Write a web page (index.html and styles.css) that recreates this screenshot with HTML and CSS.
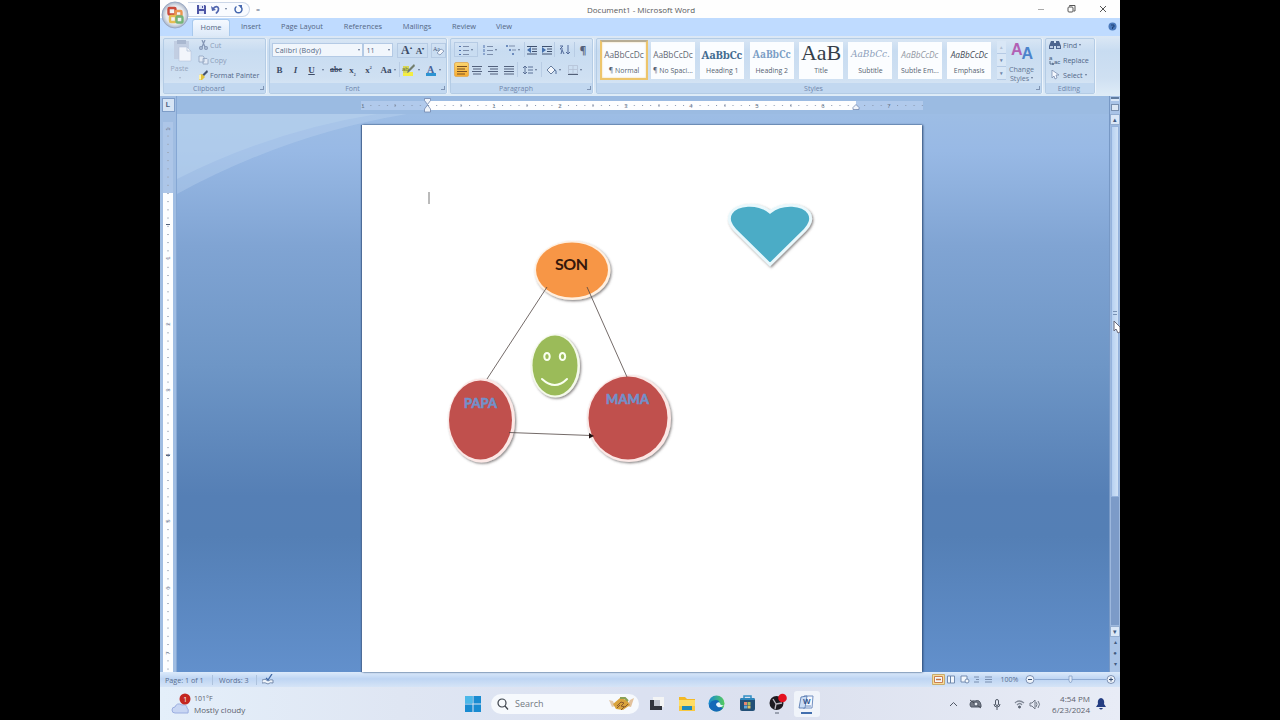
FILE: index.html
```
<!DOCTYPE html>
<html lang="en">
<head>
<meta charset="utf-8">
<title>Document1 - Microsoft Word</title>
<link rel="stylesheet" href="styles.css">
</head>
<body>
<div class="screen">
  <div class="office-button">
    <svg width="28" height="28" viewBox="0 0 28 28"><defs><radialGradient id="orb"><stop offset="0" stop-color="#fff"/><stop offset=".7" stop-color="#e4e8ee"/><stop offset="1" stop-color="#a9b4c6"/></radialGradient></defs><circle cx="14" cy="14" r="13" fill="url(#orb)" stroke="#9aa9c4"/><g fill="none" stroke-width="2.4"><rect x="7.500" y="7" width="7" height="6.500" rx="1" stroke="#c94a3b"/><rect x="14.500" y="10" width="6" height="5" rx="1" stroke="#eb9650"/><rect x="9" y="15" width="6" height="6" rx="1" stroke="#e5bd52"/><rect x="15.500" y="15.500" width="6" height="6" rx="1" stroke="#74b478"/></g></svg>
  </div>
  <header class="titlebar">
    <div class="qat">
      <svg width="9" height="9" viewBox="0 0 9 9"><path d="M0 0h8l1 1v8H0z" fill="#4d55a5"/><path d="M2 0h5v4H2zM2 6h5v3H2z" fill="#dfe5f6"/><path d="M5 1h1v2H5z" fill="#4d55a5"/></svg>
      <svg width="9" height="9" viewBox="0 0 9 9"><path d="M2 4C4 1 7 1 7.5 3.5C8 6 6 7 5 8.500" fill="none" stroke="#5065ae" stroke-width="1.7"/><path d="M0 1l1 5 4-1z" fill="#5065ae"/></svg>
      <i class="caret"></i>
      <svg class="redo" width="9" height="9" viewBox="0 0 9 9"><path d="M2.500 1.500A3.500 3.500 0 1 0 6.500 1.500" fill="none" stroke="#4567ae" stroke-width="1.5"/><path d="M4 0h4v4z" fill="#4567ae"/></svg>
    </div>
    <span class="qat-more">=</span>
    <h1>Document1 - Microsoft Word</h1>
    <div class="window-buttons">
      <svg width="74" height="12" viewBox="0 0 74 12" fill="none" stroke="#555" stroke-width="1"><path d="M2 6.500h6" stroke="#aaa"/><rect x="32" y="4" width="5" height="5" rx="1"/><path d="M33.500 3.500V2.500H39V8h-1.500"/><path d="M64 3l6 6m0-6l-6 6"/></svg>
    </div>
  </header>
  <nav class="tabs">
    <span class="tab t-home">Home</span><span class="tab t-insert">Insert</span><span class="tab t-layout">Page Layout</span><span class="tab t-ref">References</span><span class="tab t-mail">Mailings</span><span class="tab t-review">Review</span><span class="tab t-view">View</span>
    <svg class="help" width="9" height="9" viewBox="0 0 9 9"><circle cx="4.500" cy="4.500" r="4" fill="#4a79bc"/><path d="M3 3h3v2H4.500v2" fill="none" stroke="#1f4277"/></svg>
  </nav>
  <section class="ribbon">
    <div class="group g-clip">
      <div class="content clip-content">
        <div class="paste">
          <svg width="22" height="23" viewBox="0 0 22 23"><path d="M3 2h15v18H3z" fill="#c2cee2"/><path d="M6 1h9v4H6z" fill="#aab8d0"/><path d="M8 8h8l4 4v10H8z" fill="#f2f5fb" stroke="#b6c4db" stroke-width=".6"/><path d="M16 8v4h4" fill="none" stroke="#aebdd5" stroke-width=".7"/></svg>
          <span>Paste</span><i class="caret pale"></i>
        </div>
        <div class="clip-list">
          <div class="line off"><svg width="11" height="10" viewBox="0 0 11 10" fill="none" stroke="#8496b5" stroke-width="1.200"><path d="M4 0l3 7M7 0L4 7"/><circle cx="3" cy="8" r="1.400"/><circle cx="8" cy="8" r="1.400"/></svg>Cut</div>
          <div class="line off"><svg width="11" height="10" viewBox="0 0 11 10" fill="#e1e9f5" stroke="#8fa2bf" stroke-width=".8"><path d="M1 1h4l1 1v5H1zM5 3.500h4l1 1V9H5z"/></svg>Copy</div>
          <div class="line"><svg width="11" height="10" viewBox="0 0 11 10"><path d="M9 0l1 2-4 4-2-1z" fill="#43516f"/><path d="M1 5l3-1 3 3-3 3H1z" fill="#e3c33c"/><path d="M1 5l2-.5v5H1z" fill="#fff2ad"/></svg>Format Painter</div>
        </div>
      </div>
      <div class="label">Clipboard<i class="launch"></i></div>
    </div>
    <div class="group g-font">
      <div class="content">
        <div class="row">
          <div class="combo c-name">Calibri (Body)<i class="caret"></i></div>
          <div class="combo c-size">11<i class="caret"></i></div>
          <div class="cell w30 set"><b class="serif big">A<sup>▴</sup></b><b class="serif mid">A<sup>▾</sup></b></div>
          <div class="cell w15 set"><svg width="11" height="11" viewBox="0 0 11 11"><text x="0" y="6" font-size="6" fill="#48597b" font-family="Liberation Serif">Aa</text><path d="M4 8l4-4 3 2-4 4z" fill="#f3f6fb" stroke="#7387a9" stroke-width=".7"/></svg></div>
        </div>
        <div class="row second">
          <div class="cell w15 serif"><b>B</b></div><div class="cell w17 serif"><b><em>I</em></b></div><div class="cell w15 serif"><b><u>U</u></b></div><div class="cell w8"><i class="caret"></i></div><div class="cell w18 serif small"><s>abc</s></div><div class="cell w15 serif"><b>x<sub>2</sub></b></div><div class="cell w17 serif"><b>x<sup>2</sup></b></div><div class="cell w22 serif"><b>Aa</b><i class="caret"></i></div>
          <div class="cell w22 sep"><svg width="14" height="12" viewBox="0 0 14 12"><path d="M1 8h10v4H1z" fill="#f3ed42"/><path d="M1 2h6v7H1z" fill="#d8d759"/><path d="M12 0l1 2-6 6-2 1 1-3z" fill="#727e6c"/><text x="0" y="7" font-size="6" fill="#69763c" font-family="Liberation Sans">ab</text></svg><i class="caret"></i></div>
          <div class="cell w24"><svg width="12" height="12" viewBox="0 0 12 12"><text x="2" y="8.500" font-size="10" font-weight="bold" fill="#466299" font-family="Liberation Serif">A</text><path d="M1 9h10v3H1z" fill="#2c93d2"/></svg><i class="caret"></i></div>
        </div>
      </div>
      <div class="label">Font<i class="launch"></i></div>
    </div>
    <div class="group g-para">
      <div class="content">
        <div class="row">
          <div class="cell w24 set"><svg class="ico" viewBox="0 0 10 10"><path d="M0 1h2v1H0zm0 4h2v1H0zm0 4h2v1H0z" fill="#4e70ad"/><path d="M4 1.500h6m-6 4h6m-6 4h6" stroke="#7c8daa"/></svg><i class="caret"></i></div>
          <div class="cell w24"><svg class="ico" viewBox="0 0 10 10"><path d="M1 0v3m0 1v3m0 1v2" stroke="#4e70ad"/><path d="M4 1.500h6m-6 4h6m-6 4h6" stroke="#7c8daa"/></svg><i class="caret"></i></div>
          <div class="cell w22"><svg class="ico" viewBox="0 0 10 10"><path d="M0 1h2m1 4h2m1 4h2" stroke="#4e70ad" stroke-width="1.500"/><path d="M3 1h6M6 5h4" stroke="#7c8daa"/></svg><i class="caret"></i></div>
          <div class="cell w15 sep"><svg class="ico" viewBox="0 0 10 10"><path d="M0 1.500h10M5 4h5M5 6.500h5M0 9h10" stroke="#40516f"/><path d="M0 5l4-3v6z" fill="#456fac"/></svg></div>
          <div class="cell w15"><svg class="ico" viewBox="0 0 10 10"><path d="M0 1.500h10M5 4h5M5 6.500h5M0 9h10" stroke="#40516f"/><path d="M4 5L0 2v6z" fill="#456fac"/></svg></div>
          <div class="cell w20 sep"><svg class="ico" viewBox="0 0 10 10"><path d="M0 1h3L0 4h3M1 9l1-4 2 4M8 0v9M6 7l2 2 2-2" fill="none" stroke="#526b9b"/></svg></div>
          <div class="cell w17 sep pilcrow">¶</div>
        </div>
        <div class="row second align">
          <div class="cell w15 active"><svg class="ico" viewBox="0 0 10 10"><path d="M0 1.500h10M0 4h8M0 6.500h10M0 9h8" stroke="#795023"/></svg></div>
          <div class="cell w16"><svg class="ico" viewBox="0 0 10 10"><path d="M0 1.500h10M1 4h8M0 6.500h10M1 9h8" stroke="#52617d"/></svg></div>
          <div class="cell w16"><svg class="ico" viewBox="0 0 10 10"><path d="M0 1.500h10M2 4h8M0 6.500h10M2 9h8" stroke="#52617d"/></svg></div>
          <div class="cell w16"><svg class="ico" viewBox="0 0 10 10"><path d="M0 1.500h10M0 4h10M0 6.500h10M0 9h10" stroke="#52617d"/></svg></div>
          <div class="cell w24 sep"><svg class="ico" viewBox="0 0 10 10"><path d="M2 1v8M0 3l2-2 2 2M0 7l2 2 2-2M5 2h5M5 5h5M5 8h5" fill="none" stroke="#5b7096"/></svg><i class="caret"></i></div>
          <div class="cell w22 sep"><svg class="ico wide" viewBox="0 0 12 10"><path d="M2 5l4-4 4 4-4 4z" fill="#f1f5fb" stroke="#677e9f"/><path d="M9 4q3 1 2 5" fill="none" stroke="#526f9c"/></svg><i class="caret"></i></div>
          <div class="cell w24"><svg class="ico" viewBox="0 0 10 10"><path d="M.5.5h9v8h-9zM5 1v7M1 4.500h8" fill="none" stroke="#b0bdd1" stroke-width=".7"/><path d="M0 9.500h10" stroke="#526078"/></svg><i class="caret"></i></div>
        </div>
      </div>
      <div class="label">Paragraph<i class="launch"></i></div>
    </div>
    <div class="group g-styles">
      <div class="content gallery">
        <div class="style chosen"><p>AaBbCcDc</p><span>¶ Normal</span></div>
        <div class="style"><p>AaBbCcDc</p><span>¶ No Spaci...</span></div>
        <div class="style"><p class="h1s">AaBbCc</p><span>Heading 1</span></div>
        <div class="style"><p class="h2s">AaBbCc</p><span>Heading 2</span></div>
        <div class="style"><p class="title-s">AaB</p><span>Title</span></div>
        <div class="style"><p class="subtitle-s">AaBbCc.</p><span>Subtitle</span></div>
        <div class="style"><p class="subtle-s">AaBbCcDc</p><span>Subtle Em...</span></div>
        <div class="style"><p class="emph-s">AaBbCcDc</p><span>Emphasis</span></div>
        <div class="gallery-scroll"><b class="up">▴</b><b>▾</b><b>▾</b></div>
        <div class="change"><div class="aa"><b>A</b><b class="blue">A</b></div><span>Change</span><span>Styles <i class="caret"></i></span></div>
      </div>
      <div class="label">Styles<i class="launch"></i></div>
    </div>
    <div class="group g-edit">
      <div class="content edit-list">
        <div class="line"><svg width="12" height="10" viewBox="0 0 12 10"><path d="M2 1h3v8H0V6zM7 1h3l2 5v3H7zM5 3h2v3H5z" fill="#4d658f"/><path d="M1 6h3v2H1zm7 0h3v2H8z" fill="#bacae3"/></svg>Find<i class="caret"></i></div>
        <div class="line"><svg width="12" height="10" viewBox="0 0 12 10"><text x="0" y="5" font-size="6" fill="#405879" font-family="Liberation Sans">a</text><text x="5" y="9" font-size="6" fill="#405879" font-family="Liberation Sans">ac</text><path d="M1 6v3h3M3 8l2 1-2 1" fill="none" stroke="#405879" stroke-width=".8"/></svg>Replace</div>
        <div class="line"><svg width="12" height="10" viewBox="0 0 12 10"><path d="M3 0v8l2-2 1 3 2-1-1-3h3z" fill="#f5f8fe" stroke="#7184a7" stroke-width=".7"/></svg>Select<i class="caret"></i></div>
      </div>
      <div class="label">Editing</div>
    </div>
  </section>
  <main class="workspace">
    <aside class="left-rail">
      <div class="tab-stop">L</div>
      <svg width="10" height="550" viewBox="0 0 10 550" class="vruler"><defs><pattern id="vt" width="10" height="8.200" patternUnits="userSpaceOnUse" y="71"><path d="M4 .5h2" stroke="#9aa4b3" stroke-width=".8"/></pattern></defs><path d="M0 0h10v71H0z" fill="#adc6e8"/><path d="M0 71h10v479H0z" fill="#fdfeff"/><path d="M0 0h10v550H0z" fill="url(#vt)"/><path d="M3 102.500h4m-4 231h4" stroke="#53627b"/><g class="vnums"><text transform="translate(7 7) rotate(-90)">1</text><text transform="translate(7 136) rotate(-90)">1</text><text transform="translate(7 202) rotate(-90)">2</text><text transform="translate(7 268) rotate(-90)">3</text><text transform="translate(7 333) rotate(-90)">4</text><text transform="translate(7 399) rotate(-90)">5</text><text transform="translate(7 466) rotate(-90)">6</text><text transform="translate(7 531) rotate(-90)">7</text></g></svg>
    </aside>
    <div class="center">
      <div class="hruler-row">
        <svg width="562" height="18" viewBox="361 0 562 18"><defs><pattern id="ht" x="428" width="8.230" height="18" patternUnits="userSpaceOnUse"><path d="M0 9.500h1" stroke="#8794aa"/></pattern></defs><path d="M361 5h562v9H361z" fill="#b1caec"/><path d="M428 5h428v9H428z" fill="#fdfeff"/><path d="M361 5h562v9H361z" fill="url(#ht)"/><path d="M395 8v3m66-3v3m66-3v3m66-3v3m66-3v3m66-3v3m66-3v3" stroke="#8390a4" stroke-width=".8"/><g class="hnums"><text x="363" y="12">1</text><text x="494" y="12">1</text><text x="560" y="12">2</text><text x="626" y="12">3</text><text x="691" y="12">4</text><text x="757" y="12">5</text><text x="823" y="12">6</text><text x="889" y="12">7</text></g><path d="M424.500 2.500h6v2l-3 4-3-4zM424.500 13l3-4 3 4v3h-6zM853 13.500v-2l3-3 3 3v2z" fill="#f1f5fb" stroke="#7187ad" stroke-width=".8"/></svg>
      </div>
      <div class="desk">
        <article class="page">
          <svg width="560" height="547" viewBox="362 125 560 547">
            <defs><filter id="sh" x="-20%" y="-20%" width="150%" height="150%"><feDropShadow dx="1.200" dy="1.300" stdDeviation=".8" flood-color="#4c4746" flood-opacity=".65"/></filter></defs>
            <path d="M429 192v12" stroke="#777" stroke-width="1"/>
            <g filter="url(#sh)" stroke-width="2">
              <ellipse cx="572.500" cy="270.500" rx="37" ry="28.500" fill="#fff0e1" stroke="#fff0e1"/>
              <ellipse cx="555.500" cy="366" rx="23.500" ry="30.500" fill="#f5faeb" stroke="#f5faeb"/>
              <ellipse cx="481.500" cy="420.500" rx="32.500" ry="41" fill="#fce8e6" stroke="#fce8e6"/>
              <ellipse cx="629" cy="418.500" rx="41" ry="42.500" fill="#fce8e6" stroke="#fce8e6"/>
              <path d="M770 212C757 202 737 204 731 213C727 219 731 226 735 230L770 264.500L805 230C809 226 813 219 809 213C803 204 783 202 770 212z" fill="#4bacc6" stroke="#e9f8fc" stroke-width="3"/>
            </g>
            <ellipse cx="572" cy="270" rx="36" ry="27.500" fill="#f79646"/>
            <ellipse cx="555" cy="365.500" rx="22.500" ry="30" fill="#9bbb59"/>
            <ellipse cx="480.500" cy="420" rx="31.500" ry="39.500" fill="#c0504d"/>
            <ellipse cx="628" cy="418" rx="39.500" ry="41.500" fill="#c0504d"/>
            <g fill="none" stroke="#f9fff0" stroke-width="2"><ellipse cx="547" cy="356.500" rx="2.700" ry="3.600"/><ellipse cx="562.500" cy="356.500" rx="2.700" ry="3.600"/><path d="M542 379q13 12 25 0" stroke-linecap="round"/></g>
            <path d="M547 287L487 379M587 287L627 377M509 432.500L591 435.500" fill="none" stroke="#504542" stroke-width=".8"/><path d="M589 433l5 3-5 2.500z" fill="#211"/>
            <g class="shape-text"><text x="571.500" y="270" font-size="16" fill="#35170b" textLength="33">SON</text><g stroke="#7291ca" stroke-width=".6"><text x="480.500" y="408" font-size="13" fill="#7291ca" textLength="33">PAPA</text><text x="627.500" y="404" font-size="13" fill="#7291ca" textLength="43">MAMA</text></g></g>
          </svg>
        </article>
      </div>
    </div>
    <aside class="scroll">
      <div class="split"></div><div class="ruler-toggle"></div><div class="sbtn">▴</div>
      <div class="track"><div class="thumb"><i></i></div></div>
      <div class="sbtn">▾</div><div class="browse">▴</div><div class="browse">●</div><div class="browse">▾</div>
    </aside>
    <svg class="swoosh" width="230" height="82" viewBox="0 0 230 82"><path d="M0 65Q95 17 200 0H0z" fill="#bcd6f0" opacity=".4"/><path d="M0 80Q110 20 230 0H0z" fill="#bfd6f1" opacity=".35"/></svg>
    <svg class="mouse" width="7" height="13" viewBox="0 0 7 13"><path d="M1 0v10l2-2 2 4 2-1V6z" fill="#fff" stroke="#667"/></svg>
  </main>
  <footer class="status">
    <span class="page-count">Page: 1 of 1</span><span class="words">Words: 3</span><svg class="proof" width="12" height="11" viewBox="0 0 12 11"><path d="M0 6q3-2 6 1 3-2 5-1v3q-3-1-5 1-3-2-6-1z" fill="#eef4fb" stroke="#61779c" stroke-width=".8"/><path d="M4 4l2 2 4-6" fill="none" stroke="#3f67a4" stroke-width="1.300"/></svg>
    <div class="views">
      <svg width="61" height="11" viewBox="0 0 61 11"><path d="M.5.5h12v10H.5z" fill="#f8dc9b" stroke="#c8ac6e"/><g fill="#f3f7fc" stroke="#6982a8" stroke-width=".9"><path d="M2.500 2.500h8v6h-8z" stroke="#c57442"/><path d="M15.500 2h3v7h-3zm3 0h4v7h-4zM29 2h6v6h-6z"/><circle cx="35" cy="7" r="2"/></g><path d="M4 5.500h5" stroke="#c57442" stroke-width="1.500"/><path d="M42 3h5m-3 2.500h3m-5 2.500h5M53 3h7m-7 2.500h7m-7 2.500h7" stroke="#788eaf"/></svg>
    </div>
    <span class="zoom">100%</span>
    <svg width="92" height="13" viewBox="1025 0 92 13"><path d="M1035 6.500h71" stroke="#8fabd3"/><path d="M1069 3h3v5l-1.500 2-1.500-2z" fill="#dfe9f6" stroke="#7d98c0" stroke-width=".7"/><circle cx="1030" cy="6.500" r="4" fill="#eff4fa" stroke="#7c90b2"/><circle cx="1111" cy="6.500" r="4" fill="#eff4fa" stroke="#7c90b2"/><path d="M1028 6.500h4M1109 6.500h4m-2-2v4" stroke="#344c73"/></svg>
  </footer>
  <footer class="taskbar">
    <div class="weather"><svg width="21" height="22" viewBox="0 0 21 22"><path d="M4 20a3 3 0 0 1 0-6q2-5 7-2 5-1 5 3 2 1 1 5z" fill="#c8d6f3" stroke="#9baee0"/><circle cx="14" cy="6" r="5.500" fill="#c42620"/><text x="12.300" y="8.500" font-size="7" fill="#fff" font-family="Open Sans">1</text></svg><p><span>101°F</span><span>Mostly cloudy</span></p></div>
    <div class="start"><svg width="16" height="16" viewBox="0 0 16 16"><path d="M0 0h7.500v7.500H0zm8.500 0H16v7.500H8.500zM0 8.500h7.500V16H0zm8.500 0H16V16H8.500z" fill="#198bd1"/><path d="M0 0h7.500v7.500H0z" fill="#4cb8e9"/></svg></div>
    <div class="search"><svg width="12" height="12" viewBox="0 0 12 12" fill="none" stroke="#3c424b" stroke-width="1.200"><circle cx="5" cy="5" r="4"/><path d="M8 8l3 3.500"/></svg><span>Search</span><svg class="handshake" width="27" height="16" viewBox="0 0 27 16"><path d="M1 4l4 1 2 5-3 1z" fill="#e2c8aa"/><path d="M22 4l4-2-3 9-4-1z" fill="#e2c19c"/><path d="M5 8l7-6 7 2 3 5-7 5-7-1z" fill="#d9a33c"/><path d="M9 10l4-4 3 1-3 3 4 1 3-3M9 12l3-3m1 5l3-3" stroke="#8a5a2c" fill="none"/><path d="M12 2l5 0 3 3" stroke="#8aa157" stroke-width="2" fill="none"/></svg></div>
    <div class="app"><svg width="15" height="15" viewBox="0 0 15 15"><path d="M4 1h11v10H4z" fill="#f3f4f5"/><path d="M1 4h4v6h8v4H1z" fill="#30333b"/><path d="M5 4h6v6H5z" fill="#c1c5ce"/></svg></div>
    <div class="app"><svg width="18" height="16" viewBox="0 0 18 16"><path d="M1 1h6l2 2h8v12H1z" fill="#f3b927"/><path d="M1 4h16v6H1z" fill="#ffdd66"/><path d="M1 10h16v5H1z" fill="#f9c940"/><path d="M4 10h10v4H4z" fill="#238abb"/></svg></div>
    <div class="app"><svg width="17" height="17" viewBox="0 0 17 17"><defs><linearGradient id="edge"><stop stop-color="#1689d5"/><stop offset="1" stop-color="#55cb5b"/></linearGradient></defs><circle cx="8.500" cy="8.500" r="8" fill="url(#edge)"/><path d="M1 11Q2 5 8 5q4 0 3 4-3 2 4 4-5 6-11 2-3-2-3-4z" fill="#1468b8"/><path d="M8 9q2-3 4-1 0 3 4 2-3 3-6 2-2-1-2-3z" fill="#eaf5fd"/></svg></div>
    <div class="app"><svg width="17" height="17" viewBox="0 0 17 17"><path d="M5 4V1h7v3" fill="none" stroke="#308fc5" stroke-width="1.500"/><rect x="1" y="3" width="15" height="13" rx="2" fill="#235077"/><path d="M1 5q0-2 2-2h11q2 0 2 2z" fill="#2d87bd"/><path d="M5 7h3v3H5z" fill="#e78770"/><path d="M8.500 7h3v3h-3z" fill="#a2bc65"/><path d="M5 10.500h3v3H5z" fill="#62a9db"/><path d="M8.500 10.500h3v3h-3z" fill="#e1c465"/></svg></div>
    <div class="app recorder"><svg width="19" height="21" viewBox="0 0 19 21"><circle cx="8.500" cy="10" r="7" fill="#1d1b21"/><path d="M8 11L5 6m3 5l6-1m-6 1l-1 5" stroke="#bcb8c0" stroke-width="1.300"/><circle cx="14.500" cy="5" r="4.300" fill="#e41220"/><path d="M7 20h4" stroke="#858b9b" stroke-width="1.500"/></svg></div>
    <div class="app word"><svg width="17" height="21" viewBox="0 0 17 21"><path d="M6 3h9l-1 12H5z" fill="#f5f9ff" stroke="#718fc1"/><path d="M3 4l6-1-2 12H1z" fill="#cbddf5" stroke="#4b70aa" stroke-width=".8"/><text x="5" y="11" font-size="8" font-weight="bold" fill="#31578f" font-family="Liberation Sans">W</text><path d="M8 13h5" stroke="#6b8bbf"/><path d="M3 20h11" stroke="#426fae" stroke-width="2"/></svg></div>
    <div class="tray"><svg width="98" height="16" viewBox="947 0 98 16" fill="none" stroke="#515967" stroke-width="1"><path d="M950 10l3.500-3.500 3.500 3.500"/><path d="M970 9q0-5 5-4 5-2 6 4v2h-10z" fill="#737985"/><path d="M970 4l11 8" stroke="#444a55"/><circle cx="976" cy="8" r="2" fill="#e9edf4"/><rect x="995.500" y="3.500" width="3" height="6" rx="1.500"/><path d="M994 8q0 3 3 3t3-3m-3 3v3"/><path d="M1015 7q4-4 9 0m-7 2q3-3 5 0" stroke="#818997" stroke-width="1.300"/><circle cx="1019.500" cy="11" r="1" fill="#697282"/><path d="M1030 7h2l3-3v9l-3-3h-2zM1036 6q2 2 0 5m2-6q3 3 0 7" stroke="#737b88"/></svg></div>
    <p class="clock"><span>4:54 PM</span><span>6/23/2024</span></p>
    <svg class="bell" width="10" height="12" viewBox="0 0 10 12"><path d="M5 0q4 1 3 6l2 3H0l2-3Q1 1 5 0zM3 10h4q-2 3-4 0z" fill="#243d82"/></svg>
  </footer>
</div>
</body>
</html>
```
FILE: styles.css
```
*{box-sizing:border-box}
body{margin:0;background:#000;font-family:"Open Sans","Noto Sans",sans-serif;font-size:7px;color:#536684;overflow:hidden}
svg{display:block;flex:none}
p,h1{margin:0}
.screen{position:relative;width:960px;height:720px;margin:0 auto;display:flex;flex-direction:column;background:#fefefe;overflow:hidden}
.office-button{position:absolute;left:1px;top:1px;z-index:3}
.titlebar{height:18px;flex:none;display:flex;align-items:center;padding-left:28px}
.qat{width:62px;height:15px;display:flex;align-items:center;gap:5px;padding-left:9px;border:1px solid #cbd6e8;border-left:0;border-radius:0 9px 9px 0;background:#f9fbff}
.redo{margin-left:2px}
.caret{display:inline-block;width:0;height:0;flex:none;border:solid transparent;border-width:2px 1.5px 0;border-top-color:#60718e}
.pale{border-top-color:#aab7cb}
.qat-more{width:16px;text-align:center;font-size:7px}
h1{width:214px;margin-left:268px;text-align:center;font-size:8px;font-weight:400;color:#58595b;white-space:nowrap}
.window-buttons{margin-left:auto;padding-right:10px}
.tabs{height:18px;flex:none;display:flex;background:#bfdbff;padding-left:32px;font-size:7.4px;line-height:17px;position:relative}
.tab{text-align:center;white-space:nowrap}
.t-home{width:38px;margin:1px -1px 0 0;height:17px;line-height:14px;background:linear-gradient(#f4f9ff,#dce9f8);border:1px solid #a8c9ed;border-bottom:0;border-radius:3px 3px 0 0}
.t-insert,.t-mail{width:44px}.t-layout{width:58px}.t-ref{width:64px}.t-review{width:50px}.t-view{width:30px}
.help{margin:4px 3px 0 auto}
.ribbon{height:60px;flex:none;display:flex;gap:3px;padding:2px 3px 0;background:linear-gradient(#dce8f5,#c8dcf1 25%,#cfe0f2 70%,#dfecf7)}
.group{height:56px;border:1px solid #b4cce5;border-radius:2px;display:flex;flex-direction:column;box-shadow:1px 0 #eef5fc}
.content{height:44px;flex:none}
.label{height:10px;line-height:9px;padding-right:11px;text-align:center;background:#c2d8f0;color:#6f86ab;font-size:7px;display:flex;justify-content:center;align-items:center;position:relative}
.g-edit .label{padding-right:2px}
.launch{position:absolute;right:1px;top:3px;width:4px;height:4px;border:1px solid #7e93b2;border-left:0;border-top:0}
.g-clip{width:103px}.g-font{width:178px}.g-para{width:143px}.g-styles{width:446px}.g-edit{width:50px}
.clip-content{display:flex}
.paste{width:31px;display:flex;flex-direction:column;align-items:center;color:#96a5bd;font-size:7px}
.paste svg{margin-left:5px}.paste span{line-height:13px}.paste .caret{margin-top:2px}
.clip-list{display:flex;flex-direction:column;font-size:7.1px;margin-top:-2px}
.line{height:15px;display:flex;align-items:center;gap:3px;white-space:nowrap;color:#526789}.clip-list .line{padding-left:3px;gap:1px}.line.off{color:#8b9db9}
.row{display:flex;height:15px;margin:4px 0 0 2px}.row.second{margin-top:4px;height:16px}
.combo{display:flex;align-items:center;justify-content:space-between;height:14px;background:#f1f6fc;border:1px solid #b4cae5;padding:0 2px 1px;font-size:7.2px;white-space:nowrap}
.c-name{width:92px;letter-spacing:.14px}.c-size{width:30px}
.cell{height:15px;display:flex;align-items:center;justify-content:center;gap:2px;white-space:nowrap}
.set{border:1px solid #b6cbe4}.sep{border-left:1px solid #b8cce4}
.w8{width:8px}.w15{width:15px}.w16{width:16px}.w17{width:17px}.w18{width:18px}.w20{width:20px}.w22{width:22px}.w24{width:24px}.w30{width:31px;margin-left:4px}
.w15.set{margin-left:3px}
.serif{font-family:"Liberation Serif",serif;font-size:9px;color:#3d4b65}.serif sub,.serif sup,.big sup,.mid sup{font-size:4px;line-height:0}.big{font-size:12px}.mid{font-size:9px;margin-left:2px}.small{font-size:8px;font-weight:700}.w22.serif{font-size:9px}
.ico{width:10px;height:10px}.ico.wide{width:12px}
.pilcrow{font-size:10px;font-weight:700;color:#53617c}
.g-para .row{margin-left:3px}.g-para .row:first-child{margin-top:3px}.g-para .row.second{margin-top:5px}.active{background:linear-gradient(#fbd46d,#f7ac30);border:1px solid #dfb064;border-radius:2px}
.gallery{display:flex;padding:2px 0 0 3px;gap:5.4px}
.style{width:44px;height:37px;background:#fbfdff;text-align:center;overflow:hidden;white-space:nowrap;font-size:6.9px;line-height:9px;margin-top:1px;color:#555f70}
.style p{height:24px;line-height:25px;font-size:8.4px;color:#646873;letter-spacing:-.05px}.style span{display:block}
.chosen{width:48px;height:40px;margin:-1px -2.500px 0 0;border:2px solid #edc56b;border-top-color:#b7ad95;box-shadow:inset 0 0 2px #f1d593}
.style .h1s,.style .h2s,.style .title-s{font-family:"Noto Serif","DejaVu Serif",serif}.style .h1s{font-size:11px;font-weight:700;color:#426b8f;text-align:left;padding-left:1px;letter-spacing:-.3px}.style .h2s{font-size:10px;font-weight:700;color:#7c9fc6;letter-spacing:-.1px}.style .title-s{font-family:"Liberation Serif",serif;font-size:22px;color:#343e4a;line-height:22px;letter-spacing:-.1px}
.style .subtitle-s,.style .subtle-s,.style .emph-s{font-style:italic}.style .subtitle-s{font-family:"DejaVu Serif",serif;font-size:9px;color:#8d9fbb}.style .subtle-s{color:#9298a3}.style .emph-s{color:#444b57}
.gallery-scroll{width:9px;height:38px;display:flex;flex-direction:column;font-size:5px;line-height:12px;text-align:center;background:#d9e7f6;color:#7187ab}.gallery-scroll b{height:13px;border-bottom:1px solid #b5cae5}.gallery-scroll .up{color:#b0bdd2}
.change{width:29px;margin-left:-4px;display:flex;flex-direction:column;align-items:center;font-size:7.2px;line-height:9px;color:#647795;white-space:nowrap}.aa{height:25px;display:flex;font:700 16px/18px "Liberation Sans Narrow","Liberation Sans",sans-serif;color:#b260b4;letter-spacing:-1px}.aa b{height:18px}.aa .blue{margin-top:4px;color:#4b83cb}.change .caret{margin-bottom:2px}
.edit-list{padding-left:3px}.edit-list .line{gap:2px;font-size:7.2px;letter-spacing:-.05px}.edit-list .line:first-child{margin-top:-2px}
.workspace{position:relative;height:576px;flex:none;display:flex;background:linear-gradient(#9dbde5 0,#9dbde5 18px,#98b9e5 55px,#80a4d3 150px,#6e96c6 270px,#557fb5 400px,#547fb5 440px,#6290cc 576px)}
.left-rail{width:17px;flex:none;display:flex;flex-direction:column;background:#a0bde2;border-right:1px solid #85a7d4;align-items:center}
.tab-stop{width:13px;height:14px;margin:2px 0 10px;background:#d6e4f5;border:1px solid #7e9dc8;color:#4c5e80;font:700 7px/12px "Liberation Sans",sans-serif;text-align:center}
.vruler{height:550px}.vnums,.hnums{font:6px "Liberation Sans",sans-serif;fill:#69778e;text-anchor:middle}
.center{flex:1;min-width:0}.hruler-row{height:18px;padding-left:184px;background:#9bbbe2}
.desk{height:558px;padding:11px 0 0 185px}.page{width:560px;height:547px;background:#fff;box-shadow:1px 0 2px #294771,-1px 0 1px #506f9d}
.shape-text{font-family:Lato,"Open Sans",sans-serif;font-weight:700;text-anchor:middle}
.scroll{width:11px;flex:none;display:flex;flex-direction:column;background:#a9c3e6;color:#425a80;text-align:center;border-left:1px solid #7798c5}
.split{height:4px;margin:1px 1px 2px;background:#607b9f;border-bottom:2px solid #dae7f6}.ruler-toggle{height:7px;margin:1px 1px 3px;background:#dce7f4;border:1px solid #788fae}.sbtn{height:11px;font-size:7px;line-height:10px;background:#dae7f7;border:1px solid #93add0}
.track{height:501px;background:#7c9bc8;border:1px solid #9db8dd}.thumb{height:371px;background:linear-gradient(90deg,#b7d1f1,#d0e1f5);border:1px solid #94b2dc;padding:184px 1px}.thumb i{display:block;height:4px;border:solid #7891b4;border-width:1px 0}.browse{height:11px;font-size:6px;line-height:10px}
.swoosh{position:absolute;left:17px;top:18px;width:230px;clip-path:polygon(0 0,100% 0,100% 11px,184px 11px,184px 100%,0 100%)}.mouse{position:absolute;right:0;top:225px}
.status{height:15px;flex:none;display:flex;align-items:center;background:linear-gradient(#dceafb,#bed5f3 45%,#d5e4f7);font-size:7.2px;color:#566c8f;padding-left:5px;white-space:nowrap}.page-count{width:48px;border-right:1px solid #adc2dd}.words{width:44px;padding-left:6px;border-right:1px solid #adc2dd}.proof{margin-left:5px}.views{margin-left:auto;width:62px}.zoom{width:31px;text-align:center;font-size:7px}.status>svg:last-child{margin-right:3px}
.taskbar{height:33px;flex:none;display:flex;align-items:center;background:linear-gradient(90deg,#e4effa,#dfe6f3 25%,#dbe1f1 50%,#dce1ef 65%,#e8ecf6);color:#5c626e;font-size:8px}.weather{display:flex;gap:2px;width:305px;padding-left:11px}.weather p{display:flex;flex-direction:column;line-height:11px;font-size:8px}.weather span:first-child{font-size:7px}
.start{width:26px}.search{width:148px;height:20px;border-radius:10px;background:#f6f9fd;display:flex;align-items:center;padding-left:6px;gap:6px;font-size:9px;color:#737983}.handshake{margin-left:auto;margin-right:4px}
.app{width:30.400px;display:flex;align-items:center;justify-content:center;flex:none}.search+.app{margin-left:2px}.recorder{height:28px}.word{width:26px;height:26px;background:#f0f4fa;border-radius:3px;margin-left:1px}.tray{margin-left:auto}.clock{width:45px;display:flex;flex-direction:column;text-align:right;line-height:11px;font-size:8px;white-space:nowrap}.bell{margin:0 14px 0 6px}
```
